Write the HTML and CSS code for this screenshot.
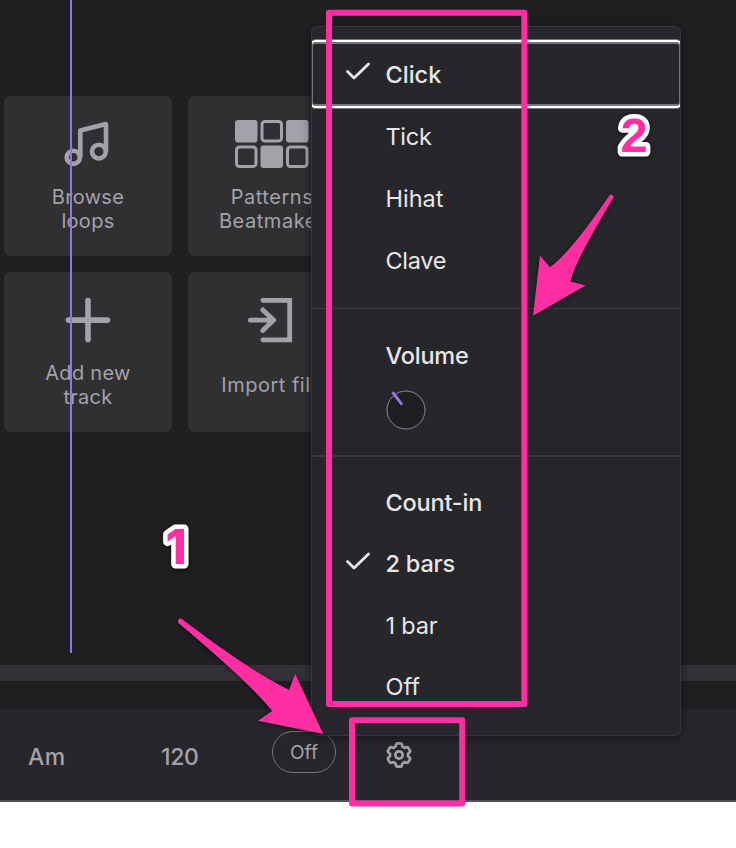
FILE: index.html
```html
<!DOCTYPE html>
<html lang="en">
<head>
<meta charset="utf-8">
<title>Metronome settings</title>
<link rel="stylesheet" href="styles.css">
</head>
<body>
<div class="studio">
  <main class="timeline">
    <div class="tiles">
      <button class="tile">
        <svg class="tile-icon" viewBox="0 0 48 48" width="48" height="48"><g fill="none" stroke="currentColor" stroke-width="4.6" stroke-linejoin="round"><circle cx="9.3" cy="37.3" r="6.600"/><path d="M16.300 37.300V10.500L42 4v27.500"/><circle cx="34.900" cy="31.600" r="6.900"/></g></svg>
        <span>Browse<br>loops</span>
      </button>
      <button class="tile">
        <svg class="tile-icon" viewBox="0 0 74 48" width="74" height="48"><g fill="currentColor" stroke="currentColor" stroke-width="3"><rect x="1.500" y="1.500" width="19.500" height="19.500" rx="1.500"/><rect x="52.500" y="1.500" width="19.500" height="19.500" rx="1.500"/><rect x="27" y="27" width="19.500" height="19.500" rx="1.500"/></g><g fill="none" stroke="currentColor" stroke-width="3"><rect x="27" y="1.500" width="19.500" height="19.500" rx="3"/><rect x="1.500" y="27" width="19.500" height="19.500" rx="3"/><rect x="52.500" y="27" width="19.500" height="19.500" rx="3"/></g></svg>
        <span class="patterns">Patterns<br>Beatmaker</span>
      </button>
      <button class="tile">
        <svg class="tile-icon" viewBox="0 0 48 48" width="48" height="48"><path d="M24 4.600v39M4.500 24.100h39" fill="none" stroke="currentColor" stroke-width="5.600" stroke-linecap="round"/></svg>
        <span>Add new<br>track</span>
      </button>
      <button class="tile">
        <svg class="tile-icon" viewBox="0 0 48 48" width="48" height="48"><g fill="none" stroke="currentColor" stroke-width="4.800" stroke-linecap="round"><path d="M14.900 4.300h26.800v39.500H14.900" stroke-linejoin="miter"/><path d="M2.300 24.100h23M14.800 13.900l10.900 10.200-10.900 10.400" stroke-linejoin="round"/></g></svg>
        <span class="import">Import file</span>
      </button>
    </div>
    <div class="playhead"></div>
  </main>
  <div class="scrollbar"></div>
  <footer class="transport">
    <span class="key">Am</span>
    <span class="tempo">120</span>
    <button class="metronome">Off</button>
    <svg class="gear" viewBox="0 0 28 28" width="28" height="28"><g fill="none" stroke="currentColor" stroke-width="2.700" stroke-linejoin="round"><path d="M11 3.600Q11.300 2.400 12.400 2.400h3.200Q16.700 2.400 17 3.600L17.400 5.600Q18.500 6.100 19.500 6.900L21.500 6.200Q22.700 5.900 23.300 6.900L24.900 9.700Q25.400 10.700 24.500 11.500L23 12.800V15.200L24.500 16.500Q25.400 17.300 24.900 18.300L23.300 21.100Q22.700 22.100 21.500 21.800L19.500 21.100Q18.500 21.900 17.400 22.400L17 24.400Q16.700 25.600 15.600 25.600h-3.200Q11.300 25.600 11 24.400L10.600 22.400Q9.500 21.900 8.500 21.100L6.500 21.800Q5.300 22.100 4.700 21.100L3.100 18.300Q2.600 17.300 3.500 16.500L5 15.200V12.800L3.500 11.500Q2.600 10.700 3.100 9.700L4.700 6.900Q5.300 5.900 6.500 6.200L8.500 6.900Q9.500 6.100 10.600 5.600Z"/><circle cx="14" cy="14" r="3.700"/></g></svg>
  </footer>

  <section class="menu">
    <div class="group sounds">
      <div class="item selected"><svg class="check" viewBox="0 0 26 20" width="26" height="20"><path d="M2.500 10.500l6.500 6.500L23.500 3"/></svg><span class="click">Click</span></div>
      <div class="item"><span class="tick">Tick</span></div>
      <div class="item"><span class="hihat">Hihat</span></div>
      <div class="item"><span class="clave">Clave</span></div>
    </div>
    <div class="group volume">
      <div class="item heading"><span>Volume</span></div>
      <svg class="knob" viewBox="0 0 40 40" width="40" height="40"><circle cx="20" cy="20" r="19" fill="#1f1f21" stroke="#8c8990"/><path d="M6.500 2.200l9.500 12.500" stroke="#9b78e8" stroke-width="2.800"/></svg>
    </div>
    <div class="group count">
      <div class="item heading"><span class="countin">Count-in</span></div>
      <div class="item chosen"><svg class="check" viewBox="0 0 26 20" width="26" height="20"><path d="M2.500 10.500l6.500 6.500L23.500 3"/></svg><span class="two">2 bars</span></div>
      <div class="item"><span class="one">1 bar</span></div>
      <div class="item"><span class="off">Off</span></div>
    </div>
  </section>

  <svg class="notes" viewBox="0 0 736 848" width="736" height="848">
    <g fill="none" stroke="#ff2fa3" stroke-width="6" stroke-linejoin="round">
      <rect x="329" y="12.700" width="195.400" height="691.300"/>
      <rect x="352" y="720.200" width="110.200" height="83.300"/>
    </g>
    <g class="arrows">
      <path d="M181.500 618.800Q247 669 289 690L295.200 674 323.300 734 258 720.800 272.200 711Q252 685 178.500 623A2.700 2.700 0 0 1 181.500 618.800Z"/>
      <path d="M609.500 195.300Q571 252 550 267.300L540 255.500 533 315.800 585.500 285.500 570.500 281.500Q573 265 613.500 197.500A2.400 2.400 0 0 0 609.500 195.300Z"/>
    </g>
    <g class="numbers"><text class="first" x="165.500" y="564">1</text><text x="620.500" y="152">2</text></g>
  </svg>
</div>
</body>
</html>
```
FILE: styles.css
```css
* { box-sizing: border-box; }
body { margin: 0; background: #fff; font-family: Inter, "Liberation Sans", sans-serif; }
button { margin: 0; padding: 0; border: 0; background: none; font: inherit; color: inherit; }
.studio { position: relative; width: 736px; height: 848px; overflow: hidden; color: #a5a1aa; }
.timeline { position: relative; height: 665px; padding: 96px 0 0 4px; background: #1f1f21; }
.tiles { display: grid; grid-template-columns: 168px 168px; grid-auto-rows: 160px; gap: 16px; }
.tile { display: flex; flex-direction: column; align-items: center; padding-top: 24px; border-radius: 6px; background: #303032; font-size: 20px; line-height: 24px; text-align: center; letter-spacing: .3px; }
.tile-icon { display: block; flex: none; margin-bottom: 17px; }
.tile .patterns { letter-spacing: .55px; }
.tile .import { margin-top: 12px; letter-spacing: .5px; }
.playhead { position: absolute; left: 69.500px; top: 0; width: 2.500px; height: 653px; background: #9774e4; }
.scrollbar { height: 44px; border-bottom: 28px solid #1f1f21; background: #333137; }
.transport { display: flex; height: 93px; border-bottom: 2px solid #535157; background: #27262b; font-size: 23px; font-weight: 500; }
.key, .tempo { line-height: 28px; margin-top: 34px; }
.key { width: 133px; padding-left: 28px; letter-spacing: .4px; }
.tempo { width: 139px; padding-left: 28px; letter-spacing: -.4px; }
.metronome { width: 64px; height: 42px; margin-top: 22px; border: 1px solid #77747c; border-radius: 21px; font-size: 19px; font-weight: 400; }
.gear { margin: 32px 0 0 48.500px; }
.menu { position: absolute; left: 311px; top: 26px; width: 370px; height: 710px; overflow: hidden; border: 1px solid #37363b; border-radius: 6px; background: #27262b; box-shadow: 0 2px 12px #0006; color: #e8e6e9; font-size: 23.500px; }
.group { display: flex; flex-direction: column; }
.sounds { height: 281px; padding-top: 15px; }
.volume { height: 147px; padding-top: 15.500px; border-top: 1px solid #3c3b40; }
.count { padding-top: 15px; border-top: 2px solid #3a393e; }
.item { display: flex; align-items: center; position: relative; height: 62.300px; padding-left: 73.500px; flex: none; }
.count .item { height: 61.600px; }
.count .heading { height: 61px; }
.selected { height: 64px; padding: 0 0 0 72.500px; border: solid #77757b; border-width: 2px 1.500px; border-radius: 4px; box-shadow: 0 0 0 2px #fff, 0 0 0 3px #77757b; }
.sounds .item:nth-child(2) { height: 61px; }
.selected, .heading, .chosen { font-weight: 500; }
.clave, .tick { letter-spacing: -.3px; }
.heading, .one, .two { letter-spacing: -.2px; }
.check { position: absolute; left: 33px; top: 18px; fill: none; stroke: #e8e6e9; stroke-width: 2.800; stroke-linecap: round; stroke-linejoin: round; }
.selected .check { left: 32px; top: 17px; }
.knob { margin: 3.500px 0 0 74px; }
.notes { position: absolute; left: 0; top: 0; }
.arrows { fill: #ff2fa3; filter: drop-shadow(0 1px 2px #0008); }
.numbers { font: bold 49px "Liberation Sans", sans-serif; fill: #ff2fa3; stroke: #fff; stroke-width: 9px; stroke-linejoin: round; paint-order: stroke; filter: drop-shadow(0 1px 2px #0008); }
.numbers .first { font: 800 48px Inter, sans-serif; }
```
